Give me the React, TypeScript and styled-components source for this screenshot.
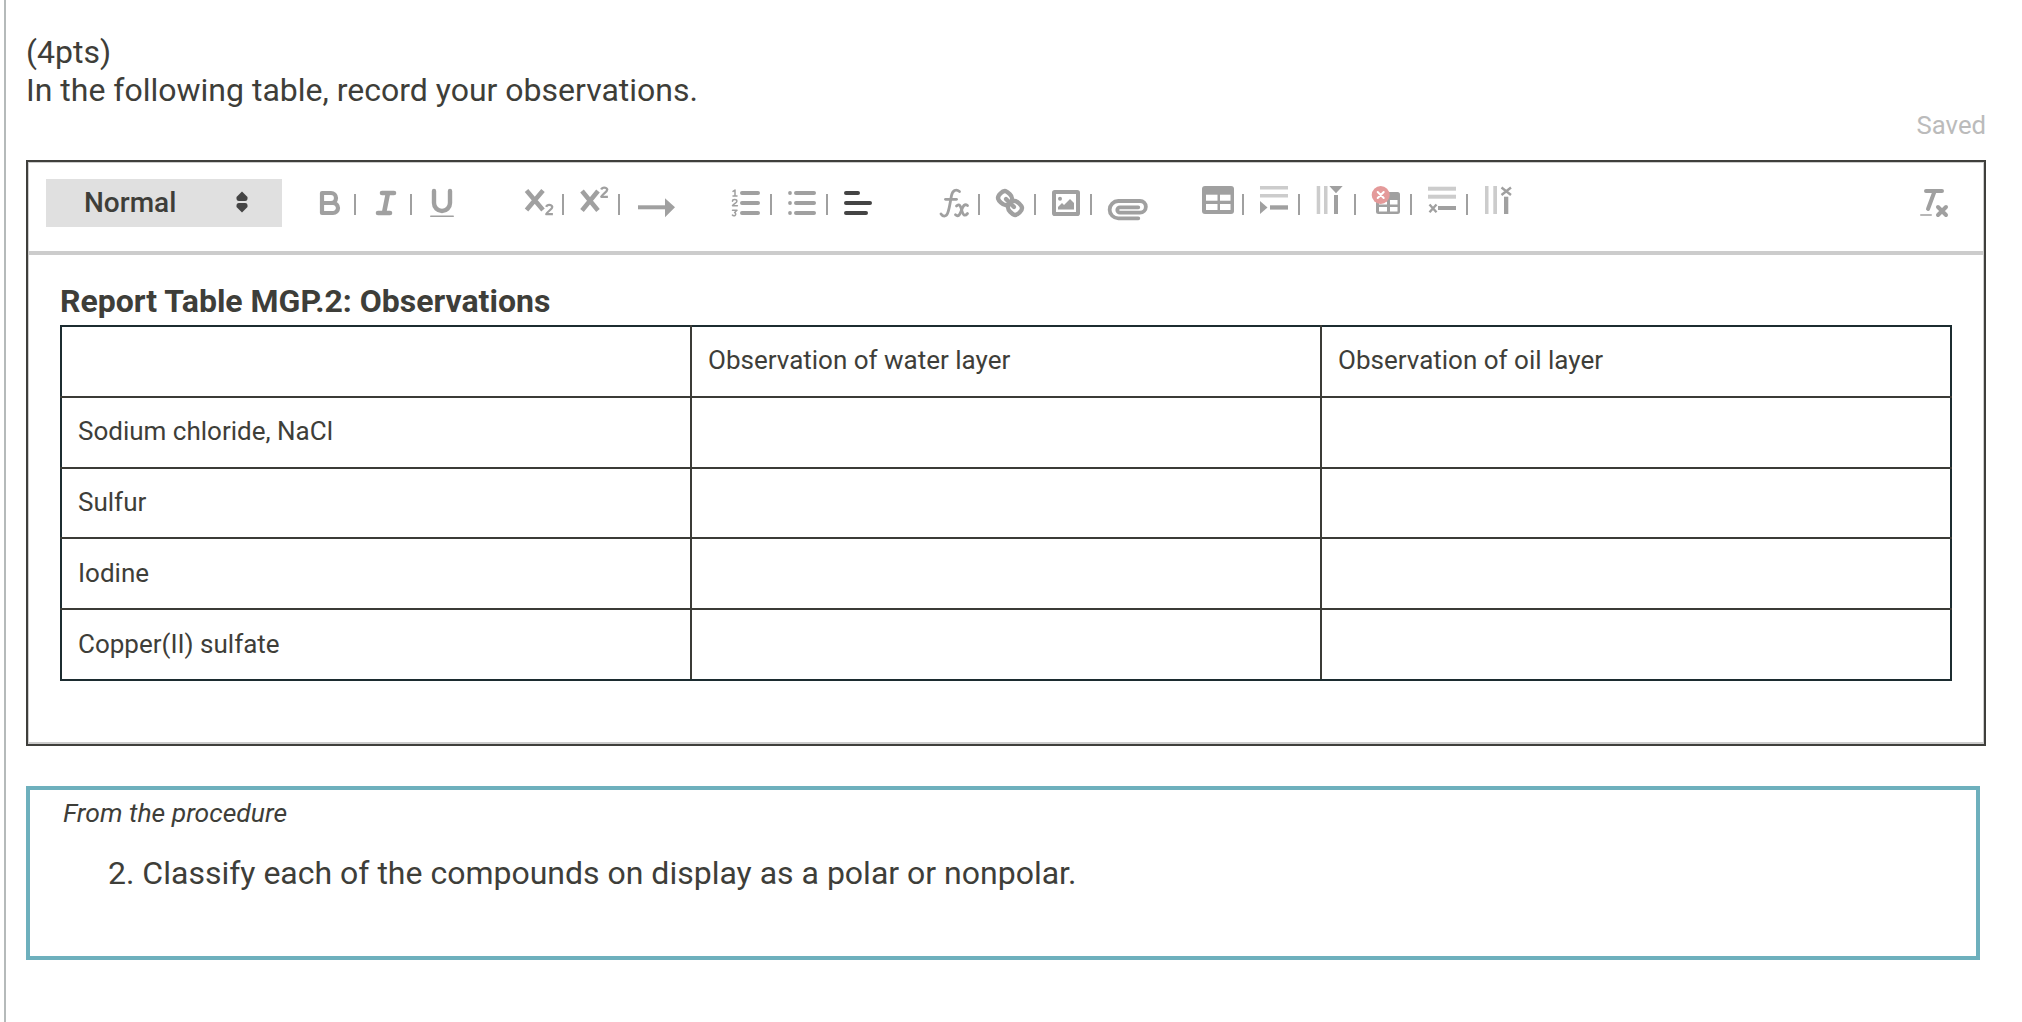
import React from 'react';
import styled, { createGlobalStyle } from 'styled-components';

const TEXT = '#3e3e39';
const ICON = '#a0a0a0';
const LIGHT = '#cccccc';
const TABLE_EDGE = '#1c2c30';

const GlobalStyle = createGlobalStyle`
  html, body {
    margin: 0;
    padding: 0;
    background: #fff;
  }
  body {
    font-family: Roboto, "Liberation Sans", sans-serif;
    color: ${TEXT};
  }
`;

const Page = styled.div`
  box-sizing: border-box;
  min-height: 1022px;
  margin-left: 4px;
  padding: 33px 36px 0 20px;
  border-left: 2px solid #b5baba;
`;

const Prompt = styled.div`
  font-size: 32px;
  line-height: 38px;
`;

const Saved = styled.div`
  margin-top: -2px;
  height: 53px;
  font-size: 25.7px;
  line-height: 36px;
  text-align: right;
  color: #bbbbbb;
`;

const Editor = styled.div`
  box-sizing: border-box;
  border: 2px solid #3f3f3c;
  height: 586px;
`;

const EditorInner = styled.div`
  box-sizing: border-box;
  height: 100%;
  border: 1px solid ${LIGHT};
  border-bottom-width: 2px;
`;

const Toolbar = styled.div`
  display: flex;
  align-items: center;
  height: 48px;
  padding: 16px 31px 24px 17px;
  border-bottom: 4px solid ${LIGHT};
`;

const Select = styled.div`
  flex: none;
  display: flex;
  align-items: center;
  justify-content: space-between;
  box-sizing: border-box;
  width: 236px;
  height: 48px;
  padding: 0 34px 2px 38px;
  background: #e0e0e0;
  font-size: 28px;
  font-weight: 500;
`;

const ToolGroup = styled.div<{ $gap: number }>`
  display: flex;
  align-items: center;
  margin-left: ${(p) => p.$gap}px;
`;

const ClearGroup = styled.div`
  display: flex;
  margin-left: auto;
`;

const Sep = styled.span`
  flex: none;
  width: 2px;
  height: 21px;
  margin: 3px 12px 0 6px;
  background: ${ICON};
`;

const Icon = styled.svg`
  display: block;
  flex: none;
  height: 36px;
  fill: none;
  stroke: ${ICON};
  stroke-width: 4;
  stroke-linecap: round;
  stroke-linejoin: round;
`;

const Body = styled.div`
  padding: 28px 31px 0;
`;

const Heading = styled.div`
  margin-bottom: 6px;
  font-size: 32px;
  font-weight: 700;
  line-height: 36px;
`;

const Table = styled.table`
  width: 100%;
  table-layout: fixed;
  border-collapse: collapse;

  tr:first-child > td {
    border-top-color: ${TABLE_EDGE};
  }
  tr:last-child > td {
    border-bottom-color: ${TABLE_EDGE};
  }
  td:first-child {
    border-left-color: ${TABLE_EDGE};
  }
  td:last-child {
    border-right-color: ${TABLE_EDGE};
  }
`;

const Cell = styled.td`
  height: 70.8px;
  padding: 0 0 2px 16px;
  border: 2px solid #3b3b36;
  font-size: 26px;
  box-sizing: border-box;
`;

const Callout = styled.div`
  box-sizing: border-box;
  width: 1954px;
  height: 174px;
  margin-top: 40px;
  padding: 5px 33px;
  border: 4px solid #6eb0bd;
`;

const Source = styled.div`
  font-size: 26.5px;
  font-style: italic;
  line-height: 36px;
`;

const Step = styled.div`
  margin-top: 22px;
  padding-left: 45px;
  font-size: 32px;
  line-height: 40px;
`;

const SelectArrows = () => (
  <svg width="12" height="22" viewBox="0 0 12 22">
    <path d="M6 0.5 L11.5 6 Q12 10 9 10 H3 Q0 10 0.5 6 Z" fill="#444" />
    <path d="M6 21.5 L11.5 16 Q12 12 9 12 H3 Q0 12 0.5 16 Z" fill="#444" />
  </svg>
);

const Digit2 = ({ x, y }: { x: number; y: number }) => (
  <path
    transform={`translate(${x} ${y})`}
    d="M0.7 2.9 A3.2 2.8 0 0 1 6.8 2.9 C6.8 5.4 2.2 7 0.7 10.2 H7.4"
    strokeWidth="2.2"
  />
);

const Bold = () => (
  <Icon viewBox="0 0 18 18" width="36" style={{ strokeWidth: 2.1 }}>
    <path d="M5 4H9.5A2.5 2.5 0 0 1 12 6.5A2.5 2.5 0 0 1 9.5 9H5V4Z" />
    <path d="M5 9H10.5A2.5 2.5 0 0 1 13 11.5A2.5 2.5 0 0 1 10.5 14H5V9Z" />
  </Icon>
);

const Italic = () => (
  <Icon viewBox="0 0 18 18" width="36" style={{ strokeWidth: 2.3 }}>
    <path d="M7 4H13M5 14H11M8 14L10 4" />
  </Icon>
);

const Underline = () => (
  <Icon viewBox="0 0 18 18" width="36" style={{ strokeWidth: 2.2 }}>
    <path d="M5 3V9A4 4 0 0 0 9 13A4 4 0 0 0 13 9V3" />
    <rect x="3" y="15.2" width="12" height="0.8" rx="0.4" fill={ICON} stroke="none" />
  </Icon>
);

const Subscript = () => (
  <Icon viewBox="0 0 36 36" width="36" style={{ strokeWidth: 4.6, strokeLinecap: 'butt' }}>
    <path d="M6.5 5.5L23 25M23 5.5L6.5 25" />
    <Digit2 x={25.5} y={19} />
  </Icon>
);

const Superscript = () => (
  <Icon viewBox="0 0 36 36" width="36" style={{ strokeWidth: 4.6, strokeLinecap: 'butt' }}>
    <path d="M6 6L22 25.5M22 6L6 25.5" />
    <Digit2 x={24.5} y={1.6} />
  </Icon>
);

const Arrow = () => (
  <Icon viewBox="0 0 44 36" width="44">
    <path d="M6 22.3H34" strokeLinecap="butt" />
    <path d="M33 13.3L43 22.3L33 32.3Z" fill={ICON} stroke="none" />
  </Icon>
);

const OrderedList = () => (
  <Icon viewBox="0 0 36 36" width="36">
    <path d="M14 8H30M14 18H30M14 28H30" />
    <path d="M5 6.4L7 5V11M5 11H9" strokeWidth="1.5" />
    <path d="M4.5 16.2A2.1 1.6 0 0 1 8.9 16.2C8.9 17.8 5.5 19 4.5 20.7H9.4" strokeWidth="1.5" />
    <path d="M4.5 25.2H9L6.6 27.5A1.8 1.7 0 1 1 4.4 30" strokeWidth="1.5" />
  </Icon>
);

const BulletList = () => (
  <Icon viewBox="0 0 36 36" width="36">
    <path d="M12 8H30M12 18H30M12 28H30" />
    <circle cx="6" cy="8" r="1.9" fill={ICON} stroke="none" />
    <circle cx="6" cy="18" r="1.9" fill={ICON} stroke="none" />
    <circle cx="6" cy="28" r="1.9" fill={ICON} stroke="none" />
  </Icon>
);

const AlignLeft = () => (
  <Icon viewBox="0 0 36 36" width="36" style={{ stroke: '#444444' }}>
    <path d="M6 8H18M6 18H30M6 28H26" />
  </Icon>
);

const Formula = () => (
  <Icon viewBox="0 0 36 36" width="36" style={{ strokeWidth: 2.8 }}>
    <path d="M23.5 6.5C20 3.5 16.5 5.5 15.5 10.5C14.2 17 13.5 24 11.5 28.5C10 31.8 6.8 31.8 5 29" />
    <path d="M9.5 14.3H20.5" />
    <path d="M20.5 21C23.5 18 24.8 21.5 25.8 25.5C26.8 29.5 28.5 32 31.5 28.5" />
    <path d="M31.5 20.5C28.8 18.3 27 20.8 25.5 25.3C24 29.5 22.3 32.5 19.5 29.8" />
  </Icon>
);

const Link = () => (
  <Icon viewBox="0 0 18 18" width="36" style={{ strokeWidth: 2.2 }}>
    <path d="M7 7L11 11" />
    <path d="M8.9 4.577a3.476 3.476 0 0 1 .36 4.679A3.476 3.476 0 0 1 4.577 8.9C3.185 7.5 2.035 6.4 4.217 4.217S7.5 3.185 8.9 4.577Z" />
    <path d="M13.423 9.1a3.476 3.476 0 0 0-4.679-.36 3.476 3.476 0 0 0 .36 4.679c1.392 1.392 2.5 2.542 4.679.36S14.815 10.5 13.423 9.1Z" />
  </Icon>
);

const ImageIcon = () => (
  <Icon viewBox="0 0 18 18" width="36" style={{ strokeWidth: 2 }}>
    <rect x="3" y="3.5" width="12" height="11" rx="0.4" />
    <circle cx="6" cy="6.9" r="1" fill={ICON} stroke="none" />
    <path d="M5 12.3V11L7 9L8 10L11 7L13 9V12.3Z" fill={ICON} stroke="none" />
  </Icon>
);

const Paperclip = () => (
  <Icon viewBox="0 0 48 36" width="48" style={{ strokeWidth: 3.8 }}>
    <path d="M34.3 33.3H14.3A8.65 8.65 0 0 1 14.3 16H36A5.85 5.85 0 0 1 36 27.7H16A2.7 2.7 0 0 1 16 22.3H34.3" />
  </Icon>
);

const TableIcon = () => (
  <Icon viewBox="0 0 36 36" width="36" style={{ stroke: 'none' }}>
    <rect x="2" y="1" width="32" height="28" rx="3" fill={ICON} />
    <rect x="6" y="9.7" width="11.5" height="6" fill="#fff" />
    <rect x="20" y="9.7" width="10.5" height="6" fill="#fff" />
    <rect x="6" y="19" width="11.5" height="6" fill="#fff" />
    <rect x="20" y="19" width="10.5" height="6" fill="#fff" />
  </Icon>
);

const InsertRow = () => (
  <Icon viewBox="0 0 36 36" width="36" style={{ stroke: 'none' }}>
    <rect x="4" y="1" width="28" height="3.5" fill={LIGHT} />
    <rect x="4" y="9" width="28" height="3.5" fill={LIGHT} />
    <path d="M4 16L11.5 22.5L4 29Z" fill={ICON} />
    <rect x="14" y="20.3" width="18" height="4.3" fill={ICON} />
  </Icon>
);

const InsertColumn = () => (
  <Icon viewBox="0 0 36 36" width="36" style={{ stroke: 'none' }}>
    <rect x="4.7" y="1" width="3.5" height="28" fill={LIGHT} />
    <rect x="12" y="1" width="3.5" height="28" fill={LIGHT} />
    <path d="M17.3 1H30.7L24 8.3Z" fill={ICON} />
    <rect x="22" y="10" width="4" height="19" fill={ICON} />
  </Icon>
);

const DeleteTable = () => (
  <Icon viewBox="0 0 36 36" width="36" style={{ stroke: 'none' }}>
    <rect x="8" y="7" width="24" height="22" rx="2.5" fill={ICON} />
    <rect x="11" y="15" width="8" height="4.5" fill="#fff" />
    <rect x="22" y="15" width="7.5" height="4.5" fill="#fff" />
    <rect x="11" y="22" width="8" height="4.5" fill="#fff" />
    <rect x="22" y="22" width="7.5" height="4.5" fill="#fff" />
    <circle cx="12.7" cy="10" r="9" fill="#e49a9a" />
    <path d="M9.7 7L15.7 13M15.7 7L9.7 13" stroke="#fff" strokeWidth="2" fill="none" />
  </Icon>
);

const DeleteRow = () => (
  <Icon viewBox="0 0 36 36" width="36" style={{ stroke: 'none' }}>
    <rect x="4" y="1.7" width="28" height="4" fill={LIGHT} />
    <rect x="4" y="9.7" width="28" height="4" fill={LIGHT} />
    <path d="M5.5 19.5L12.5 27.2M12.5 19.5L5.5 27.2" stroke={ICON} strokeWidth="2.4" strokeLinecap="butt" fill="none" />
    <rect x="14" y="21" width="18" height="4" fill={ICON} />
  </Icon>
);

const DeleteColumn = () => (
  <Icon viewBox="0 0 36 36" width="36" style={{ stroke: 'none' }}>
    <rect x="5" y="1" width="3.5" height="28" fill={LIGHT} />
    <rect x="13.3" y="1" width="3.7" height="28" fill={LIGHT} />
    <rect x="24" y="11.7" width="4.3" height="17.3" fill={ICON} />
    <path d="M21.5 2.5L31 10M31 2.5L21.5 10" stroke={ICON} strokeWidth="2.4" strokeLinecap="butt" fill="none" />
  </Icon>
);

const ClearFormat = () => (
  <Icon viewBox="0 0 18 18" width="36" style={{ strokeWidth: 2 }}>
    <path d="M5 3H13M6 12L9.35 3M11 11L15 15M15 11L11 15" />
    <rect x="2" y="14.6" width="6" height="0.8" rx="0.4" fill={ICON} stroke="none" />
  </Icon>
);

const rows = ['', 'Sodium chloride, NaCl', 'Sulfur', 'Iodine', 'Copper(II) sulfate'];

const App: React.FC = () => (
  <>
    <GlobalStyle />
    <Page>
      <Prompt>
        (4pts)
        <br />
        In the following table, record your observations.
      </Prompt>
      <Saved>Saved</Saved>

      <Editor>
        <EditorInner>
          <Toolbar>
            <Select>
              Normal
              <SelectArrows />
            </Select>
            <ToolGroup $gap={30}>
              <Bold />
              <Sep />
              <Italic />
              <Sep />
              <Underline />
            </ToolGroup>
            <ToolGroup $gap={60}>
              <Subscript />
              <Sep />
              <Superscript />
              <Sep />
              <Arrow />
            </ToolGroup>
            <ToolGroup $gap={52}>
              <OrderedList />
              <Sep />
              <BulletList />
              <Sep />
              <AlignLeft />
            </ToolGroup>
            <ToolGroup $gap={60}>
              <Formula />
              <Sep />
              <Link />
              <Sep />
              <ImageIcon />
              <Sep />
              <Paperclip />
            </ToolGroup>
            <ToolGroup $gap={48}>
              <TableIcon />
              <Sep />
              <InsertRow />
              <Sep />
              <InsertColumn />
              <Sep />
              <DeleteTable />
              <Sep />
              <DeleteRow />
              <Sep />
              <DeleteColumn />
            </ToolGroup>
            <ClearGroup>
              <ClearFormat />
            </ClearGroup>
          </Toolbar>

          <Body>
            <Heading>Report Table MGP.2: Observations</Heading>
            <Table>
              <tbody>
                {rows.map((name, i) => (
                  <tr key={i}>
                    <Cell>{name}</Cell>
                    <Cell>{i === 0 ? 'Observation of water layer' : ''}</Cell>
                    <Cell>{i === 0 ? 'Observation of oil layer' : ''}</Cell>
                  </tr>
                ))}
              </tbody>
            </Table>
          </Body>
        </EditorInner>
      </Editor>

      <Callout>
        <Source>From the procedure</Source>
        <Step>2. Classify each of the compounds on display as a polar or nonpolar.</Step>
      </Callout>
    </Page>
  </>
);

export default App;
